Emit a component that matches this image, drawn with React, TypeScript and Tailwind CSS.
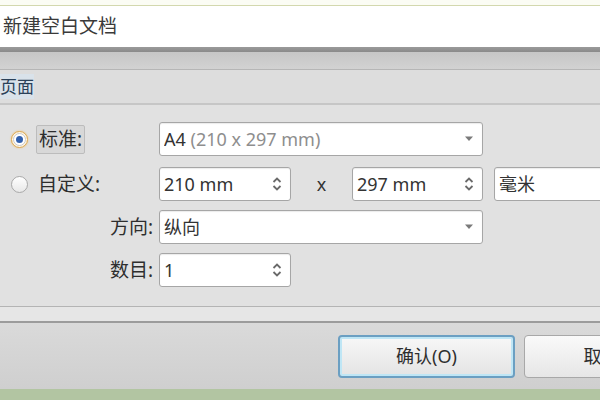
import React from 'react';

const font = "font-['Noto_Sans','Noto_Sans_CJK_SC',sans-serif]";

function DropArrow() {
  return (
    <svg width="10" height="6" viewBox="0 0 10 6" className="shrink-0">
      <path d="M1 0.5 L9 0.5 L5 5 Z" fill="#7a7a7a" />
    </svg>
  );
}

function SpinArrows() {
  return (
    <svg width="10" height="18" viewBox="0 0 10 18" className="shrink-0">
      <path d="M1.5 7 L5 3.5 L8.5 7" fill="none" stroke="#6a6a6a" strokeWidth="1.8" />
      <path d="M1.5 11 L5 14.5 L8.5 11" fill="none" stroke="#6a6a6a" strokeWidth="1.8" />
    </svg>
  );
}

function Radio({ checked }: { checked?: boolean }) {
  if (checked) {
    return (
      <div className="w-[17px] h-[17px] rounded-full border border-[#d9a95a] bg-[#fff7e6] flex items-center justify-center shadow-[0_0_2px_#f0c070]">
        <div className="w-[13px] h-[13px] rounded-full bg-white border border-[#c9c9c9] flex items-center justify-center">
          <div className="w-[7px] h-[7px] rounded-full bg-[#2f5fae]" />
        </div>
      </div>
    );
  }
  return (
    <div className="w-[17px] h-[17px] rounded-full border border-[#a9a9a9] bg-gradient-to-b from-[#ffffff] to-[#e8e8e8]" />
  );
}

function Field({ children, width, right }: { children: React.ReactNode; width: string; right?: React.ReactNode }) {
  return (
    <div className={`${width} h-[34px] shrink-0 bg-white border border-[#a6a6a6] rounded-[3px] shadow-[inset_0_1px_1px_rgba(0,0,0,0.08)] flex items-center pl-[4px] pr-[8px]`}>
      <div className="flex-1 text-[18px] text-[#333] whitespace-nowrap overflow-hidden">{children}</div>
      {right}
    </div>
  );
}

export default function App() {
  return (
    <div className={`w-[600px] h-[400px] overflow-hidden flex flex-col bg-[#e0e0e0] ${font}`}>
      {/* title */}
      <div className="h-[6px] bg-[#fbfcf4] border-b border-[#d3d8ae] shrink-0" />
      <div className="h-[41px] bg-white flex items-center pl-[3px] text-[19px] text-[#3a3a3a] shrink-0">
        新建空白文档
      </div>
      <div className="h-[5px] bg-gradient-to-b from-[#9a9a9a] to-[#8a8a8a] shrink-0" />
      <div className="h-[18px] bg-gradient-to-b from-[#c6c6c6] to-[#d2d2d2] border-b border-[#b6b6b6] shrink-0" />

      {/* section header */}
      <div className="h-[35px] bg-[#dddddd] border-b-2 border-[#c6c6c6] flex items-center shrink-0">
        <span className="text-[17px] text-[#2a4058] bg-[#d9e2ea]">页面</span>
      </div>

      {/* form */}
      <div className="h-[201px] shrink-0 bg-[#e1e1e1] flex flex-col pt-[17px] text-[#2e2e2e] text-[19px]">
        <div className="flex items-center h-[34px]">
          <div className="w-[159px] shrink-0 flex items-center pl-[11px]">
            <Radio checked />
            <span className="ml-[8px] px-[2px] h-[29px] flex items-center border border-[#bcbcbc] bg-[#d8d8d8] rounded-[2px]">
              标准:
            </span>
          </div>
          <Field width="w-[324px]" right={<DropArrow />}>
            A4 <span className="text-[#8e8e8e]">(210 x 297 mm)</span>
          </Field>
        </div>

        <div className="flex items-center h-[34px] mt-[11px]">
          <div className="w-[159px] shrink-0 flex items-center pl-[11px]">
            <Radio />
            <span className="ml-[10px]">自定义:</span>
          </div>
          <Field width="w-[132px]" right={<SpinArrows />}>
            210 mm
          </Field>
          <div className="w-[61px] shrink-0 text-center text-[18px] text-[#333]">x</div>
          <Field width="w-[131px]" right={<SpinArrows />}>
            297 mm
          </Field>
          <div className="ml-[11px]">
            <Field width="w-[130px]">毫米</Field>
          </div>
        </div>

        <div className="flex items-center h-[34px] mt-[9px]">
          <div className="w-[159px] shrink-0 flex justify-end pr-[6px]">方向:</div>
          <Field width="w-[324px]" right={<DropArrow />}>
            纵向
          </Field>
        </div>

        <div className="flex items-center h-[34px] mt-[9px]">
          <div className="w-[159px] shrink-0 flex justify-end pr-[6px]">数目:</div>
          <Field width="w-[132px]" right={<SpinArrows />}>
            1
          </Field>
        </div>
      </div>

      {/* separator */}
      <div className="h-[17px] shrink-0 bg-[#e6e6e6] border-t border-[#b4b4b4] border-b-2 border-b-[#9c9c9c]" />

      {/* buttons */}
      <div className="flex-1 bg-gradient-to-b from-[#dadada] to-[#cfcfcf] flex items-start pt-[12px] pl-[338px] gap-[9px]">
        <button className="w-[177px] h-[43px] shrink-0 rounded-[4px] border-2 border-[#6b9fc2] shadow-[inset_0_0_0_2px_#bfe6f5] bg-gradient-to-b from-[#f7f7f7] to-[#e4e4e4] text-[18px] text-[#2e2e2e]">
          确认(O)
        </button>
        <button className="w-[177px] h-[43px] shrink-0 rounded-[4px] border border-[#a8a8a8] bg-gradient-to-b from-[#fafafa] to-[#e6e6e6] text-[18px] text-[#2e2e2e]">
          取消(C)
        </button>
      </div>
      <div className="h-[11px] shrink-0 bg-[#b2c5a2]" />
    </div>
  );
}
